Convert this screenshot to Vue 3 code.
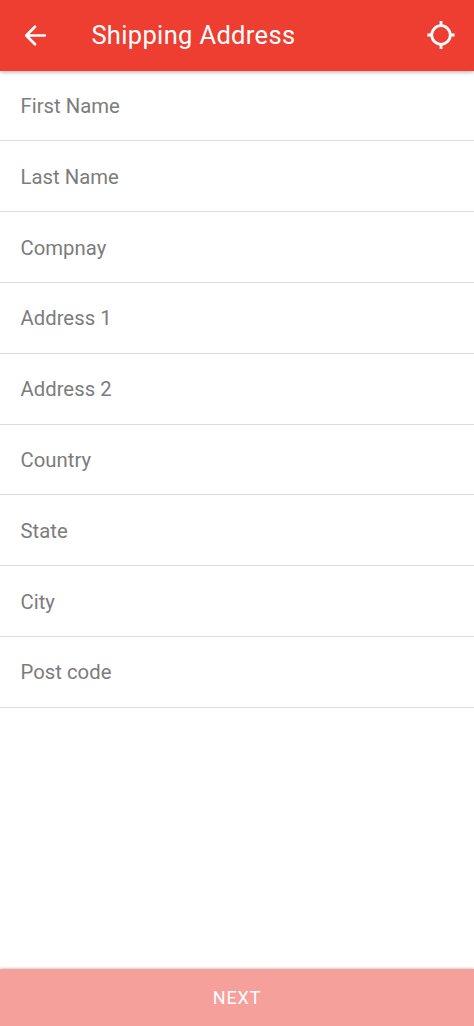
<script setup>
const fields = ['First Name', 'Last Name', 'Compnay', 'Address 1', 'Address 2', 'Country', 'State', 'City', 'Post code']
</script>

<template>
  <div class="screen">
    <header class="bar">
      <svg class="back" viewBox="0 0 31 31"><path d="M15 6.7L6.3 15.5L15 24.2M6.5 15.5H24.7" /></svg>
      <h1>Shipping Address</h1>
      <svg class="locate" viewBox="0 0 30 30">
        <circle cx="15" cy="15" r="9.3" />
        <path d="M15 1V5.5M15 24.5V29M1.4 15H5.5M24.5 15H28.6" />
      </svg>
    </header>
    <main class="fields">
      <div v-for="f in fields" :key="f" class="field">{{ f }}</div>
    </main>
    <button class="next">NEXT</button>
  </div>
</template>

<style>
body { margin: 0; }
</style>

<style scoped>
.screen {
  display: flex;
  flex-direction: column;
  height: 1026px;
  background: #fff;
  font-family: Roboto, sans-serif;
}
.bar {
  display: flex;
  align-items: center;
  height: 70.6px;
  flex: none;
  box-sizing: border-box;
  padding: 0 18.5px 0 20px;
  background: #ee3e32;
  color: #fff;
  box-shadow: 0 1px 4px rgba(0, 0, 0, 0.35);
}
svg { fill: none; stroke: #fff; stroke-linejoin: round; flex: none; }
.back { width: 31px; height: 31px; stroke-width: 2.7; stroke-linecap: round; }
.locate { width: 30px; height: 30px; margin-left: auto; stroke-width: 2.8; }
h1 {
  margin: 0 0 0 40.4px;
  font-size: 25.5px;
  font-weight: 400;
  letter-spacing: 0.34px;
}
.fields { flex: 1; }
.field {
  display: flex;
  align-items: center;
  height: 70.8px;
  box-sizing: border-box;
  padding: 1px 0 0 20.5px;
  border-bottom: 1px solid #dcdcdc;
  color: #7c7c7c;
  font-size: 20.3px;
  letter-spacing: 0.02px;
}
.next {
  flex: none;
  height: 57px;
  border: 0;
  padding: 0 0 1px;
  background: #f5a09a;
  color: #fff;
  font: 400 18px Roboto, sans-serif;
  letter-spacing: 0.9px;
  box-shadow: 0 -1px 2px rgba(0, 0, 0, 0.2);
}
</style>
